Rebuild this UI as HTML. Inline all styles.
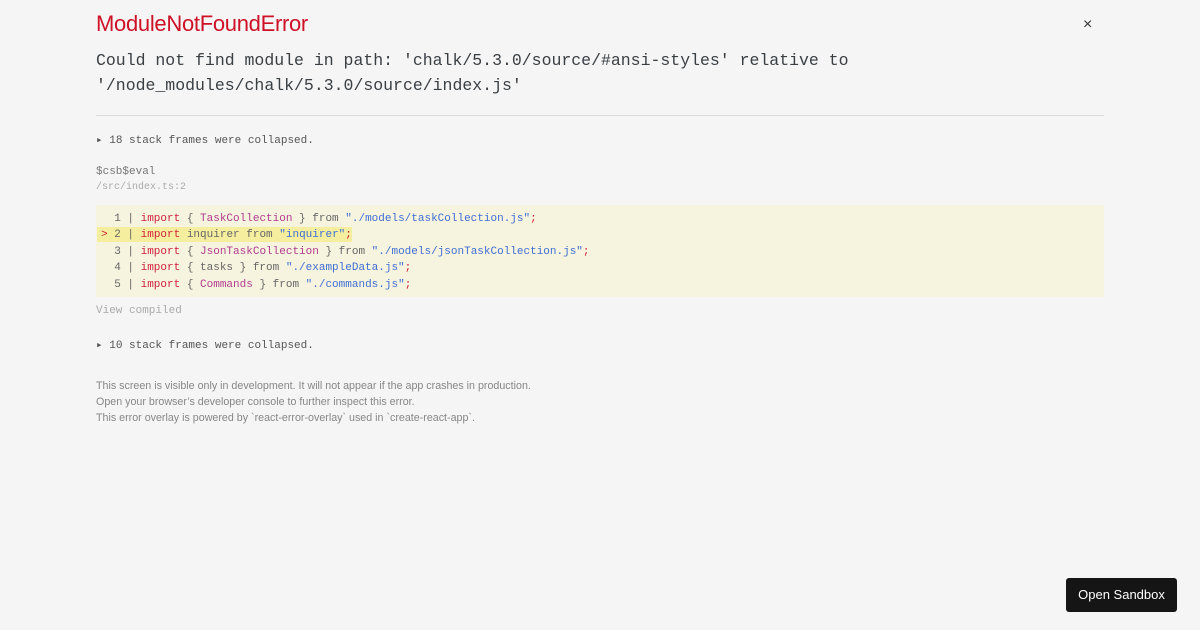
<!DOCTYPE html>
<html><head><meta charset="utf-8"><style>
body{margin:0;width:1200px;height:630px;background:#f5f5f5;position:relative;overflow:hidden;font-family:"Liberation Sans",sans-serif}
.a{position:absolute;white-space:pre}
.m{font-family:"Liberation Mono",monospace}
.t{left:96px;top:11px;font-size:22px;color:#ce1126;letter-spacing:-0.3px}
.msg{left:96px;font-size:16.5px;color:#3a3f44;line-height:25px}
.hr{position:absolute;left:96px;width:1008px;top:115px;height:1px;background:#ddd}
.s{font-size:11px;color:#555}
.code{position:absolute;left:96px;top:205px;width:1008px;height:92px;background:#f6f3df}
.cl{left:101px;font-size:11px;color:#666;line-height:16.5px}
.k{color:#d01f3c}.c{color:#b23c8f}.str{color:#3f6fd4}
.hl{position:absolute;left:97px;top:227px;width:255px;height:15px;background:#f5ee9f}
.f{left:96px;font-size:10.7px;color:#878787;line-height:16px}
.btn{position:absolute;left:1066px;top:578px;width:111px;height:34px;background:#151515;border-radius:3px;color:#fff;font-size:13px;text-align:center;line-height:34px}
</style></head><body>
<div class="a t">ModuleNotFoundError</div>
<div class="a" style="left:1083px;top:16px;font-size:16px;color:#333">×</div>
<div class="a m msg" style="top:48px">Could not find module in path: 'chalk/5.3.0/source/#ansi-styles' relative to
'/node_modules/chalk/5.3.0/source/index.js'</div>
<div class="hr"></div>
<div class="a m s" style="left:96px;top:133px">▸ 18 stack frames were collapsed.</div>
<div class="a m s" style="left:96px;top:166px;color:#777">$csb$eval</div>
<div class="a m s" style="left:96px;top:182px;color:#aaa;font-size:10px">/src/index.ts:2</div>
<div class="code"></div>
<div class="hl"></div>
<div class="a m cl" style="top:210.5px">  1 | <span class="k">import</span> { <span class="c">TaskCollection</span> } from <span class="str">"./models/taskCollection.js"</span><span class="k">;</span>
<span class="k">&gt;</span> 2 | <span class="k">import</span> inquirer from <span class="str">"inquirer"</span><span class="k">;</span>
  3 | <span class="k">import</span> { <span class="c">JsonTaskCollection</span> } from <span class="str">"./models/jsonTaskCollection.js"</span><span class="k">;</span>
  4 | <span class="k">import</span> { tasks } from <span class="str">"./exampleData.js"</span><span class="k">;</span>
  5 | <span class="k">import</span> { <span class="c">Commands</span> } from <span class="str">"./commands.js"</span><span class="k">;</span></div>
<div class="a m s" style="left:96px;top:305px;color:#aaa">View compiled</div>
<div class="a m s" style="left:96px;top:338px">▸ 10 stack frames were collapsed.</div>
<div class="a f" style="top:378px">This screen is visible only in development. It will not appear if the app crashes in production.
Open your browser’s developer console to further inspect this error.
This error overlay is powered by `react-error-overlay` used in `create-react-app`.</div>
<div class="btn">Open Sandbox</div>
</body></html>
